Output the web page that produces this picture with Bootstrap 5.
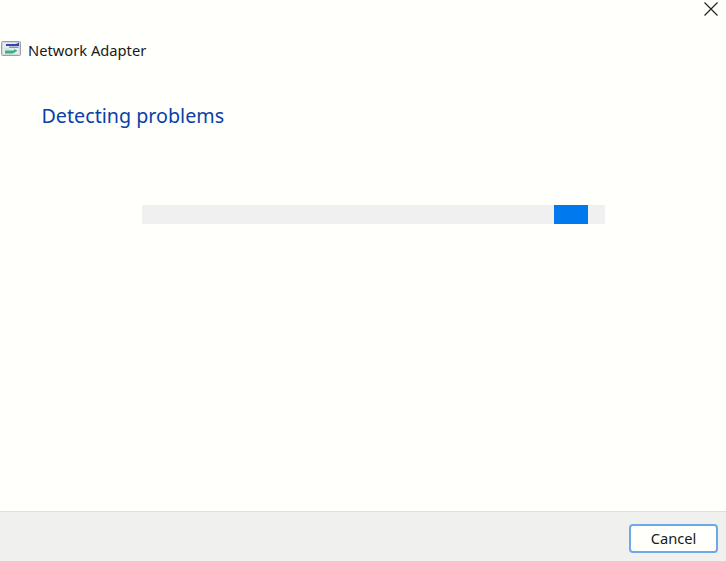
<!DOCTYPE html>
<html lang="en">
<head>
<meta charset="utf-8">
<title>Network Adapter</title>
<link href="https://cdn.jsdelivr.net/npm/bootstrap@5.3.0/dist/css/bootstrap.min.css" rel="stylesheet">
<style>
html,body{height:100%;margin:0}
body{background:#fffffb;font-family:"Noto Sans","Open Sans",sans-serif;color:#1a1a1a;overflow:hidden}
.dlg{height:561px}
.close-row{height:41px;padding:2px 8px 0 0}
.close-x{display:block;width:14px;height:14px}
.title-row{height:19px;padding-left:1px;gap:7px;font-size:14.7px;line-height:19px}
.app-ico{margin-bottom:4px}
.heading{margin:42px 0 0 41.500px;font-size:19.7px;line-height:28px;font-weight:400;color:#0a3fa8}
.prog-wrap{margin:75px 0 0 142px;width:463px}
.prog-bar{height:19px;background:#f0f0f0;border-radius:0}
.prog-chunk{margin-left:411.500px;background:#0078ee;height:19px}
.foot{height:50px;background:#f0f0ef;border-top:1px solid #dfdfdf;padding:12px 8px 0 0}
.cancel-btn{width:89px;height:29px;padding:0;font-size:14.7px;line-height:25px;background:#fffffb;border:2px solid #6aaae6;border-radius:4px;color:#1a1a1a}
</style>
</head>
<body>
<div class="dlg d-flex flex-column">
  <div class="close-row d-flex justify-content-end flex-shrink-0">
    <svg class="close-x" viewBox="0 0 14 14" aria-label="Close"><path d="M.5.5l13 13M13.5.5l-13 13" stroke="#222" stroke-width="1.2" fill="none"/></svg>
  </div>
  <div class="title-row d-flex align-items-center flex-shrink-0">
    <svg class="app-ico" width="20" height="15" viewBox="0 0 20 15" aria-hidden="true">
      <rect x=".5" y=".5" width="19" height="14" rx="1" fill="#d3d7dc" stroke="#9aa0a8"/>
      <rect x="2" y="2" width="16" height="11" fill="#e9ebee"/>
      <path d="M5 3h10l3-1.500v3.500h-13z" fill="#3a44ad"/>
      <path d="M8 5.500h9.500v1.500h-9.500z" fill="#8796c6"/>
      <path d="M4 9.500h9v-1.500l3.500 1.800-4.500 2.700h-8z" fill="#2fb57f"/>
      <path d="M3 7.500h5v1h-5z" fill="#bcdfcd"/>
    </svg>
    <span>Network Adapter</span>
  </div>
  <h1 class="heading">Detecting problems</h1>
  <div class="prog-wrap">
    <div class="progress prog-bar" role="progressbar" aria-label="Detecting problems">
      <div class="progress-bar prog-chunk" style="width:34px"></div>
    </div>
  </div>
  <div class="foot mt-auto d-flex justify-content-end flex-shrink-0">
    <button type="button" class="btn cancel-btn">Cancel</button>
  </div>
</div>
<script src="https://cdn.jsdelivr.net/npm/bootstrap@5.3.0/dist/js/bootstrap.bundle.min.js"></script>
</body>
</html>
